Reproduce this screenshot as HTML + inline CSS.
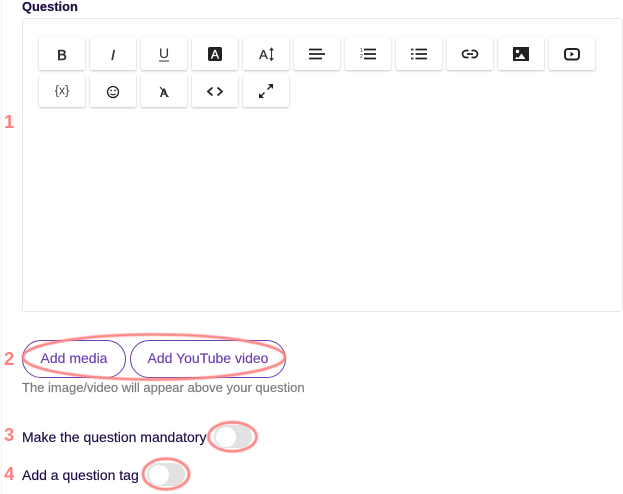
<!DOCTYPE html>
<html><head><meta charset="utf-8">
<style>
html,body{margin:0;padding:0;background:#fff}
body{width:623px;height:494px;position:relative;overflow:hidden;font-family:"Liberation Sans",sans-serif}
.a{position:absolute}
.edge{left:1px;top:0;width:1px;height:494px;background:#f2f2f2}
.box{left:22px;top:18px;width:599px;height:292px;border:1px solid #e8e8e8;border-radius:3px}
.b{position:absolute;width:46px;height:33px;background:#fff;border-radius:2px;box-shadow:0 1px 2px rgba(0,0,0,.22),0 0 1px rgba(0,0,0,.06)}
.b svg{position:absolute;left:0;top:0}
.t{white-space:nowrap;line-height:1;-webkit-text-stroke:.15px currentColor}
.pill{position:absolute;height:36px;border:1px solid #6c3fb0;border-radius:19px;color:#6c3fb0;font-size:14px;line-height:34px;text-align:center;box-sizing:content-box;white-space:nowrap;-webkit-text-stroke:.15px currentColor}
.n{color:#ff8080;font-weight:bold;font-size:18.500px;line-height:1;left:4px;white-space:nowrap}
.track{position:absolute;width:38px;height:23px;background:#e2e2e2;border-radius:12px}
.knob{position:absolute;left:2px;top:1.500px;width:20px;height:20px;background:#fff;border-radius:50%}
</style></head><body>
<div class="a edge"></div>
<div class="a t" style="left:22px;top:1px;font-size:12.900px;font-weight:bold;color:#1d0a45">Question</div>
<div class="a box"></div>

<div class="b" style="left:39px;top:37px"><svg width="46" height="33"><text x="23" y="23" font-family="Liberation Sans" font-size="14.500" text-anchor="middle" fill="#333" stroke="#333" stroke-width=".6">B</text></svg></div>
<div class="b" style="left:90px;top:37px"><svg width="46" height="33"><text x="23" y="23" font-family="Liberation Sans" font-size="15" font-style="italic" text-anchor="middle" fill="#333" stroke="#333" stroke-width=".3">I</text></svg></div>
<div class="b" style="left:141px;top:37px"><svg width="46" height="33"><text x="23" y="21" font-family="Liberation Sans" font-size="14" text-anchor="middle" fill="#333">U</text><rect x="18" y="23.500" width="10" height="1" fill="#333"/></svg></div>
<div class="b" style="left:192px;top:37px"><svg width="46" height="33"><rect x="16" y="10" width="14" height="14" rx="2" fill="#222"/><text x="23" y="21.500" font-family="Liberation Sans" font-size="12" text-anchor="middle" fill="#fff" stroke="#fff" stroke-width=".3">A</text></svg></div>
<div class="b" style="left:243px;top:37px"><svg width="46" height="33"><text x="20.500" y="22" font-family="Liberation Sans" font-size="13" text-anchor="middle" fill="#333" stroke="#333" stroke-width=".3">A</text><path d="M28.500 12v10.500M26.700 13.500l1.800-2.300 1.800 2.300M26.700 21l1.800 2.300 1.800-2.300" stroke="#333" stroke-width="1.100" fill="none"/></svg></div>
<div class="b" style="left:294px;top:37px"><svg width="46" height="33"><path d="M15 12.500h13M15 17h16M15 21.500h13" stroke="#222" stroke-width="1.700" fill="none"/></svg></div>
<div class="b" style="left:345px;top:37px"><svg width="46" height="33"><path d="M19 12.500h12M19 17h12M19 21.500h12" stroke="#222" stroke-width="1.700" fill="none"/><text x="15" y="15" font-family="Liberation Sans" font-size="5" fill="#333">1</text><text x="15" y="21" font-family="Liberation Sans" font-size="5" fill="#333">2</text></svg></div>
<div class="b" style="left:396px;top:37px"><svg width="46" height="33"><path d="M19.500 12.500h11.500M19.500 17h11.500M19.500 21.500h11.500" stroke="#222" stroke-width="1.700" fill="none"/><path d="M15 12.500h2.500M15 17h2.500M15 21.500h2.500" stroke="#333" stroke-width="1.700" fill="none"/></svg></div>
<div class="b" style="left:447px;top:37px"><svg width="46" height="33"><path d="M21.500 13.500h-2.500a3.500 3.500 0 0 0 0 7h2.500M24.500 13.500h2.500a3.500 3.500 0 0 1 0 7h-2.500M20 17h6" stroke="#222" stroke-width="1.700" fill="none"/></svg></div>
<div class="b" style="left:498px;top:37px"><svg width="46" height="33"><rect x="15" y="10" width="16" height="14" fill="#222"/><circle cx="19.500" cy="14.500" r="1.700" fill="#fff"/><path d="M17 22l1.800-2.300 1.500 1.300 3.200-4.500 4 5.500z" fill="#fff"/></svg></div>
<div class="b" style="left:549px;top:37px"><svg width="46" height="33"><rect x="16" y="12" width="14" height="10.500" rx="3" fill="none" stroke="#222" stroke-width="2"/><path d="M21.500 14.800l3.500 2.400-3.500 2.400z" fill="#222"/></svg></div>

<div class="b" style="left:39px;top:74px"><svg width="46" height="33"><text x="23" y="20.500" font-family="Liberation Sans" font-size="12.500" text-anchor="middle" fill="#444">{x}</text></svg></div>
<div class="b" style="left:90px;top:74px"><svg width="46" height="33"><circle cx="23" cy="18" r="5.500" fill="none" stroke="#222" stroke-width="1.300"/><circle cx="21" cy="16.500" r=".9" fill="#222"/><circle cx="25" cy="16.500" r=".9" fill="#222"/><path d="M20.500 19.800q2.500 2 5 0" stroke="#222" stroke-width="1" fill="none"/></svg></div>
<div class="b" style="left:141px;top:74px"><svg width="46" height="33"><text x="23" y="23" font-family="Liberation Sans" font-size="12" font-weight="bold" text-anchor="middle" fill="#333">A</text><path d="M19 13l8.500 10" stroke="#333" stroke-width="1.100"/></svg></div>
<div class="b" style="left:192px;top:74px"><svg width="46" height="33"><path d="M20.500 13.500l-4.500 4 4.500 4M25.500 13.500l4.500 4-4.500 4" stroke="#222" stroke-width="1.800" fill="none"/></svg></div>
<div class="b" style="left:243px;top:74px"><svg width="46" height="33"><path d="M17 23l4.500-4.500M29 11l-4.500 4.500" stroke="#222" stroke-width="1.400" fill="none"/><path d="M16 19v5h5zM30 15v-5h-5z" fill="#222"/></svg></div>

<div class="a n" style="top:113px">1</div>
<div class="pill" style="left:22px;top:340px;width:102px">Add media</div>
<div class="pill" style="left:130px;top:340px;width:154px">Add YouTube video</div>
<div class="a n" style="top:350px">2</div>
<div class="a t" style="left:22px;top:381px;font-size:13px;color:#7a7a7a">The image/video will appear above your question</div>

<div class="a n" style="top:426px">3</div>
<div class="a t" style="left:22px;top:430px;font-size:14px;color:#1d0a45">Make the question mandatory</div>
<div class="track" style="left:214px;top:425px"><div class="knob"></div></div>

<div class="a n" style="top:465px">4</div>
<div class="a t" style="left:22px;top:468px;font-size:14px;color:#1d0a45">Add a question tag</div>
<div class="track" style="left:147px;top:463px"><div class="knob"></div></div>

<svg class="a" style="left:0;top:0" width="623" height="494">
<g fill="none" stroke="#fb8585" stroke-width="2.800" style="filter:blur(.4px)">
<ellipse cx="154" cy="357" rx="131" ry="22.500"/>
<ellipse cx="232.500" cy="436.800" rx="24" ry="14.500"/>
<ellipse cx="166" cy="474" rx="23" ry="15.300"/>
</g></svg>
</body></html>
